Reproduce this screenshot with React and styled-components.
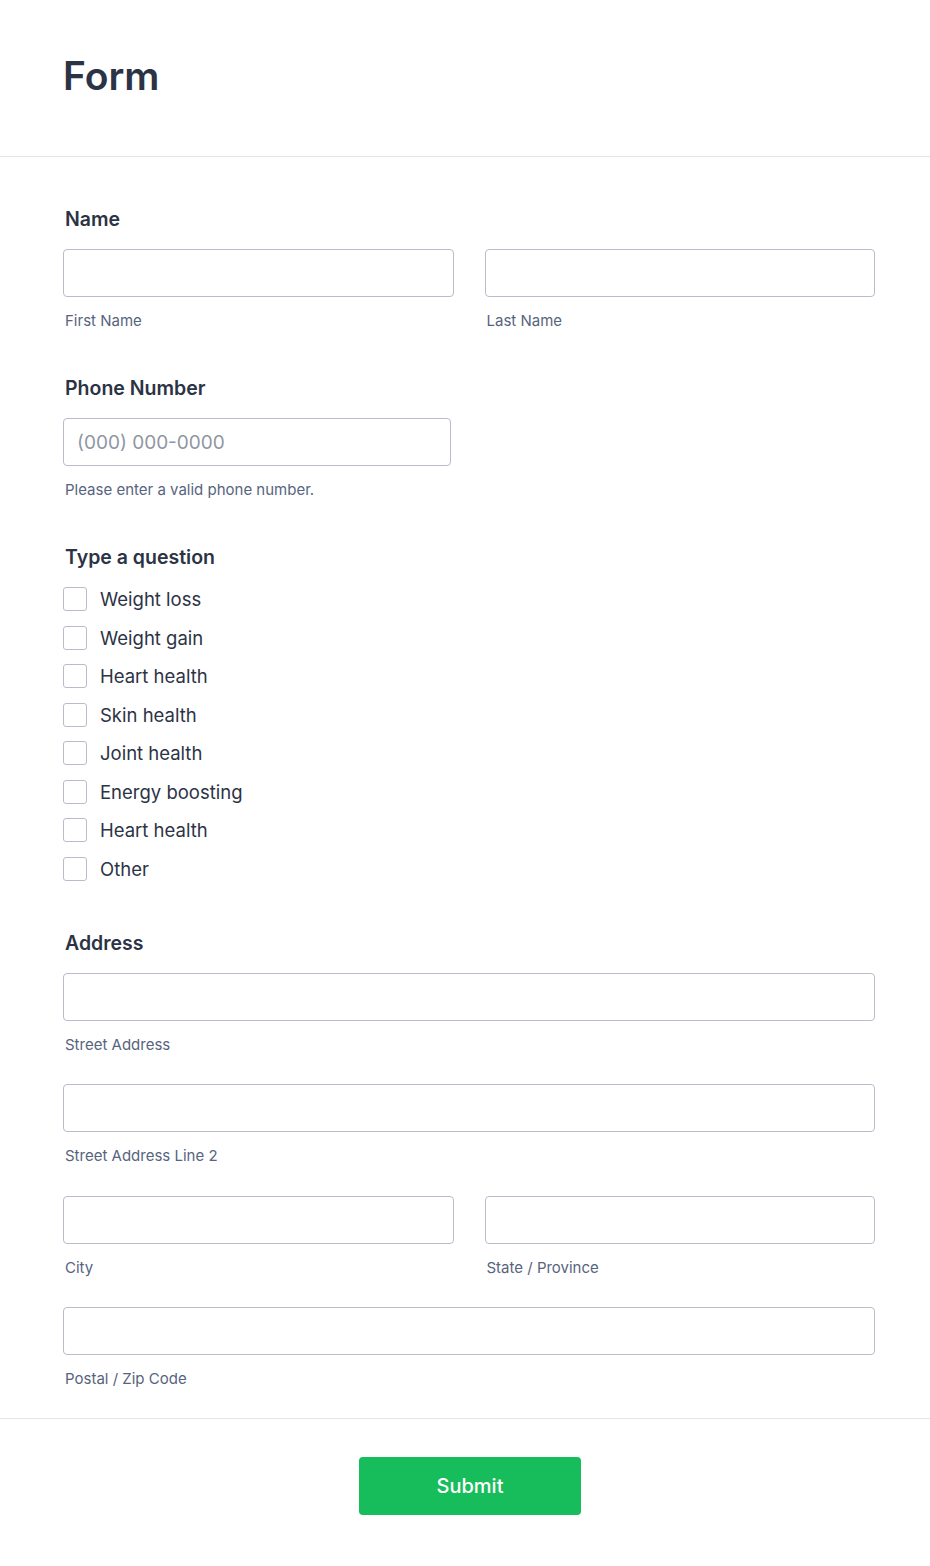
import React from 'react'
import styled, { createGlobalStyle } from 'styled-components'

const GlobalStyle = createGlobalStyle`
  body {
    margin: 0;
    background: #fff;
    font-family: Inter, "Noto Sans", sans-serif;
    color: #2c3345;
  }
  * { box-sizing: border-box; }
`

const Page = styled.div`
  width: 930px;
  background: #fff;
`

const Header = styled.header`
  height: 157px;
  padding: 50px 0 0 63px;
  border-bottom: 1px solid #e3e5ea;
`

const Title = styled.h1`
  margin: 0;
  font-size: 39px;
  line-height: 52px;
  font-weight: 600;
  color: #2c3345;
`

const Body = styled.div`
  padding: 50px 55px 28.5px 63px;
  border-bottom: 1px solid #e3e5ea;
`

const Section = styled.div`
  margin-top: ${p => p.$gap || 0}px;
`

const Label = styled.div`
  padding-left: 2px;
  font-size: 19.5px;
  line-height: 24px;
  font-weight: 600;
  color: #2c3345;
  margin-bottom: 18px;
`

const Row = styled.div`
  display: flex;
  gap: 31px;
  & + & {
    margin-top: 29.5px;
  }
`

const Field = styled.div`
  width: ${p => p.$width || 'auto'};
  flex: ${p => (p.$width ? '0 0 auto' : '1')};
`

const Input = styled.input`
  display: block;
  width: 100%;
  height: 48px;
  border: 1px solid #b8bdc9;
  border-radius: 4px;
  padding: 0 13px;
  font-family: Inter, "Noto Sans", sans-serif;
  font-size: 19px;
  color: #2c3345;
  background: #fff;
  outline: none;
  &::placeholder {
    color: #8f96a3;
  }
`

const Sub = styled.div`
  margin-top: 14px;
  padding-left: 2px;
  font-size: 15px;
  line-height: 20px;
  color: #57647e;
`

const Options = styled.div`
  display: flex;
  flex-direction: column;
  gap: 14.5px;
`

const Option = styled.label`
  display: flex;
  align-items: center;
  gap: 13px;
  height: 24px;
  font-size: 18.5px;
  color: #2c3345;
  cursor: pointer;
`

const Box = styled.span`
  width: 24px;
  height: 24px;
  border: 1px solid #b8bdc9;
  border-radius: 3px;
  background: #fff;
  flex: none;
`

const Footer = styled.div`
  display: flex;
  justify-content: center;
  padding: 38px 0 50px 10px;
`

const Submit = styled.button`
  width: 222px;
  height: 58px;
  border: none;
  border-radius: 4px;
  background: #18bd5b;
  color: #fff;
  font-family: Inter, "Noto Sans", sans-serif;
  font-size: 20px;
  font-weight: 500;
  cursor: pointer;
`

const choices = [
  'Weight loss',
  'Weight gain',
  'Heart health',
  'Skin health',
  'Joint health',
  'Energy boosting',
  'Heart health',
  'Other',
]

const App = () => {
  return (
    <Page>
      <GlobalStyle />
      <Header>
        <Title>Form</Title>
      </Header>
      <Body>
        <Section>
          <Label>Name</Label>
          <Row>
            <Field>
              <Input type='text' />
              <Sub>First Name</Sub>
            </Field>
            <Field>
              <Input type='text' />
              <Sub>Last Name</Sub>
            </Field>
          </Row>
        </Section>

        <Section $gap={45}>
          <Label>Phone Number</Label>
          <Field $width='388px'>
            <Input type='tel' placeholder='(000) 000-0000' />
            <Sub>Please enter a valid phone number.</Sub>
          </Field>
        </Section>

        <Section $gap={45}>
          <Label>Type a question</Label>
          <Options>
            {choices.map((c, i) => (
              <Option key={i}>
                <Box />
                {c}
              </Option>
            ))}
          </Options>
        </Section>

        <Section $gap={50}>
          <Label>Address</Label>
          <Row>
            <Field>
              <Input type='text' />
              <Sub>Street Address</Sub>
            </Field>
          </Row>
          <Row>
            <Field>
              <Input type='text' />
              <Sub>Street Address Line 2</Sub>
            </Field>
          </Row>
          <Row>
            <Field>
              <Input type='text' />
              <Sub>City</Sub>
            </Field>
            <Field>
              <Input type='text' />
              <Sub>State / Province</Sub>
            </Field>
          </Row>
          <Row>
            <Field>
              <Input type='text' />
              <Sub>Postal / Zip Code</Sub>
            </Field>
          </Row>
        </Section>
      </Body>
      <Footer>
        <Submit type='button'>Submit</Submit>
      </Footer>
    </Page>
  )
}

export default App
